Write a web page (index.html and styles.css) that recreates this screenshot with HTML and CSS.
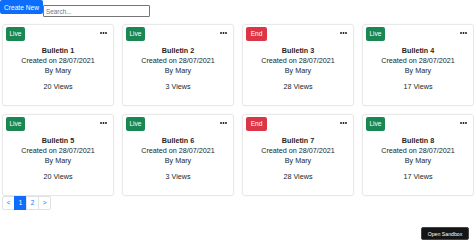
FILE: index.html
```html
<!DOCTYPE html>
<html>
<head>
<meta charset="utf-8">
<link rel="stylesheet" href="styles.css">
</head>
<body>
<div class="toolbar">
  <button class="btn-create">Create New</button>
  <input class="search" type="text" placeholder="Search...">
</div>
<div class="grid">
  <div class="card"><div class="card-head"><span class="badge live">Live</span><svg class="dots" viewBox="0 0 7 2"><circle cx="1" cy="1" r="0.95"/><circle cx="3.5" cy="1" r="0.95"/><circle cx="6" cy="1" r="0.95"/></svg></div><div class="title">Bulletin 1</div><div class="line">Created on 28/07/2021</div><div class="line">By Mary</div><div class="views">20 Views</div></div>
  <div class="card"><div class="card-head"><span class="badge live">Live</span><svg class="dots" viewBox="0 0 7 2"><circle cx="1" cy="1" r="0.95"/><circle cx="3.5" cy="1" r="0.95"/><circle cx="6" cy="1" r="0.95"/></svg></div><div class="title">Bulletin 2</div><div class="line">Created on 28/07/2021</div><div class="line">By Mary</div><div class="views">3 Views</div></div>
  <div class="card"><div class="card-head"><span class="badge end">End</span><svg class="dots" viewBox="0 0 7 2"><circle cx="1" cy="1" r="0.95"/><circle cx="3.5" cy="1" r="0.95"/><circle cx="6" cy="1" r="0.95"/></svg></div><div class="title">Bulletin 3</div><div class="line">Created on 28/07/2021</div><div class="line">By Mary</div><div class="views">28 Views</div></div>
  <div class="card"><div class="card-head"><span class="badge live">Live</span><svg class="dots" viewBox="0 0 7 2"><circle cx="1" cy="1" r="0.95"/><circle cx="3.5" cy="1" r="0.95"/><circle cx="6" cy="1" r="0.95"/></svg></div><div class="title">Bulletin 4</div><div class="line">Created on 28/07/2021</div><div class="line">By Mary</div><div class="views">17 Views</div></div>
  <div class="card"><div class="card-head"><span class="badge live">Live</span><svg class="dots" viewBox="0 0 7 2"><circle cx="1" cy="1" r="0.95"/><circle cx="3.5" cy="1" r="0.95"/><circle cx="6" cy="1" r="0.95"/></svg></div><div class="title">Bulletin 5</div><div class="line">Created on 28/07/2021</div><div class="line">By Mary</div><div class="views">20 Views</div></div>
  <div class="card"><div class="card-head"><span class="badge live">Live</span><svg class="dots" viewBox="0 0 7 2"><circle cx="1" cy="1" r="0.95"/><circle cx="3.5" cy="1" r="0.95"/><circle cx="6" cy="1" r="0.95"/></svg></div><div class="title">Bulletin 6</div><div class="line">Created on 28/07/2021</div><div class="line">By Mary</div><div class="views">3 Views</div></div>
  <div class="card"><div class="card-head"><span class="badge end">End</span><svg class="dots" viewBox="0 0 7 2"><circle cx="1" cy="1" r="0.95"/><circle cx="3.5" cy="1" r="0.95"/><circle cx="6" cy="1" r="0.95"/></svg></div><div class="title">Bulletin 7</div><div class="line">Created on 28/07/2021</div><div class="line">By Mary</div><div class="views">28 Views</div></div>
  <div class="card"><div class="card-head"><span class="badge live">Live</span><svg class="dots" viewBox="0 0 7 2"><circle cx="1" cy="1" r="0.95"/><circle cx="3.5" cy="1" r="0.95"/><circle cx="6" cy="1" r="0.95"/></svg></div><div class="title">Bulletin 8</div><div class="line">Created on 28/07/2021</div><div class="line">By Mary</div><div class="views">17 Views</div></div>
</div>
<div class="pager">
  <span class="page">&lt;</span>
  <span class="page active">1</span>
  <span class="page">2</span>
  <span class="page">&gt;</span>
</div>
<button class="sandbox">Open Sandbox</button>
</body>
</html>
```
FILE: styles.css
```css
* { box-sizing: border-box; }
body {
  margin: 0;
  font-family: "Liberation Sans", Arial, sans-serif;
  font-size: 7.2px;
  color: #212529;
  background: #fff;
}
.toolbar {
  display: flex;
  align-items: flex-start;
  height: 17px;
}
.btn-create {
  width: 43px;
  height: 14px;
  padding: 0;
  border: none;
  border-radius: 2px;
  background: #0d6efd;
  color: #fff;
  font-family: inherit;
  font-size: 6.6px;
}
.search {
  margin-top: 5px;
  width: 107px;
  height: 12px;
  padding: 0 2px;
  border: 1px solid #767676;
  border-radius: 1px;
  font-family: inherit;
  font-size: 6.4px;
}
.search::placeholder { color: #757575; }
.grid {
  display: grid;
  grid-template-columns: repeat(4, 112px);
  grid-auto-rows: 82px;
  column-gap: 8px;
  row-gap: 8px;
  margin: 7px 0 0 2px;
}
.card {
  border: 1px solid #e8e8e8;
  border-radius: 3px;
  box-shadow: 0 0 2px rgba(0,0,0,0.06);
  padding: 2px 3px 0 3px;
  text-align: center;
}
.card-head {
  display: flex;
  justify-content: space-between;
  align-items: flex-start;
  height: 14px;
}
.badge {
  display: inline-block;
  height: 14px;
  line-height: 14px;
  padding: 0 3px;
  border-radius: 2px;
  color: #fff;
  font-size: 6.6px;
}
.badge.live { background: #198754; min-width: 19px; }
.badge.end { background: #dc3545; min-width: 21px; }
.dots {
  width: 7px;
  height: 2px;
  margin-top: 5px;
  margin-right: 3px;
  fill: #111;
}
.title {
  margin-top: 5px;
  font-weight: bold;
  line-height: 10px;
}
.line { line-height: 10px; }
.views { margin-top: 6px; line-height: 10px; }
.pager {
  display: flex;
  margin: 0 0 0 2px;
}
.page {
  width: 13px;
  height: 14px;
  line-height: 12px;
  text-align: center;
  border: 1px solid #dee2e6;
  margin-left: -1px;
  color: #0d6efd;
  font-size: 6.4px;
}
.page:first-child { margin-left: 0; border-radius: 2px 0 0 2px; }
.page:last-child { border-radius: 0 2px 2px 0; }
.page.active { background: #0d6efd; border-color: #0d6efd; color: #fff; }
.sandbox {
  position: fixed;
  right: 5px;
  bottom: 8px;
  width: 48px;
  height: 13px;
  padding: 0;
  border: 1px solid #444;
  border-radius: 2px;
  background: #151515;
  color: #fff;
  font-family: inherit;
  font-size: 5.2px;
}
```
